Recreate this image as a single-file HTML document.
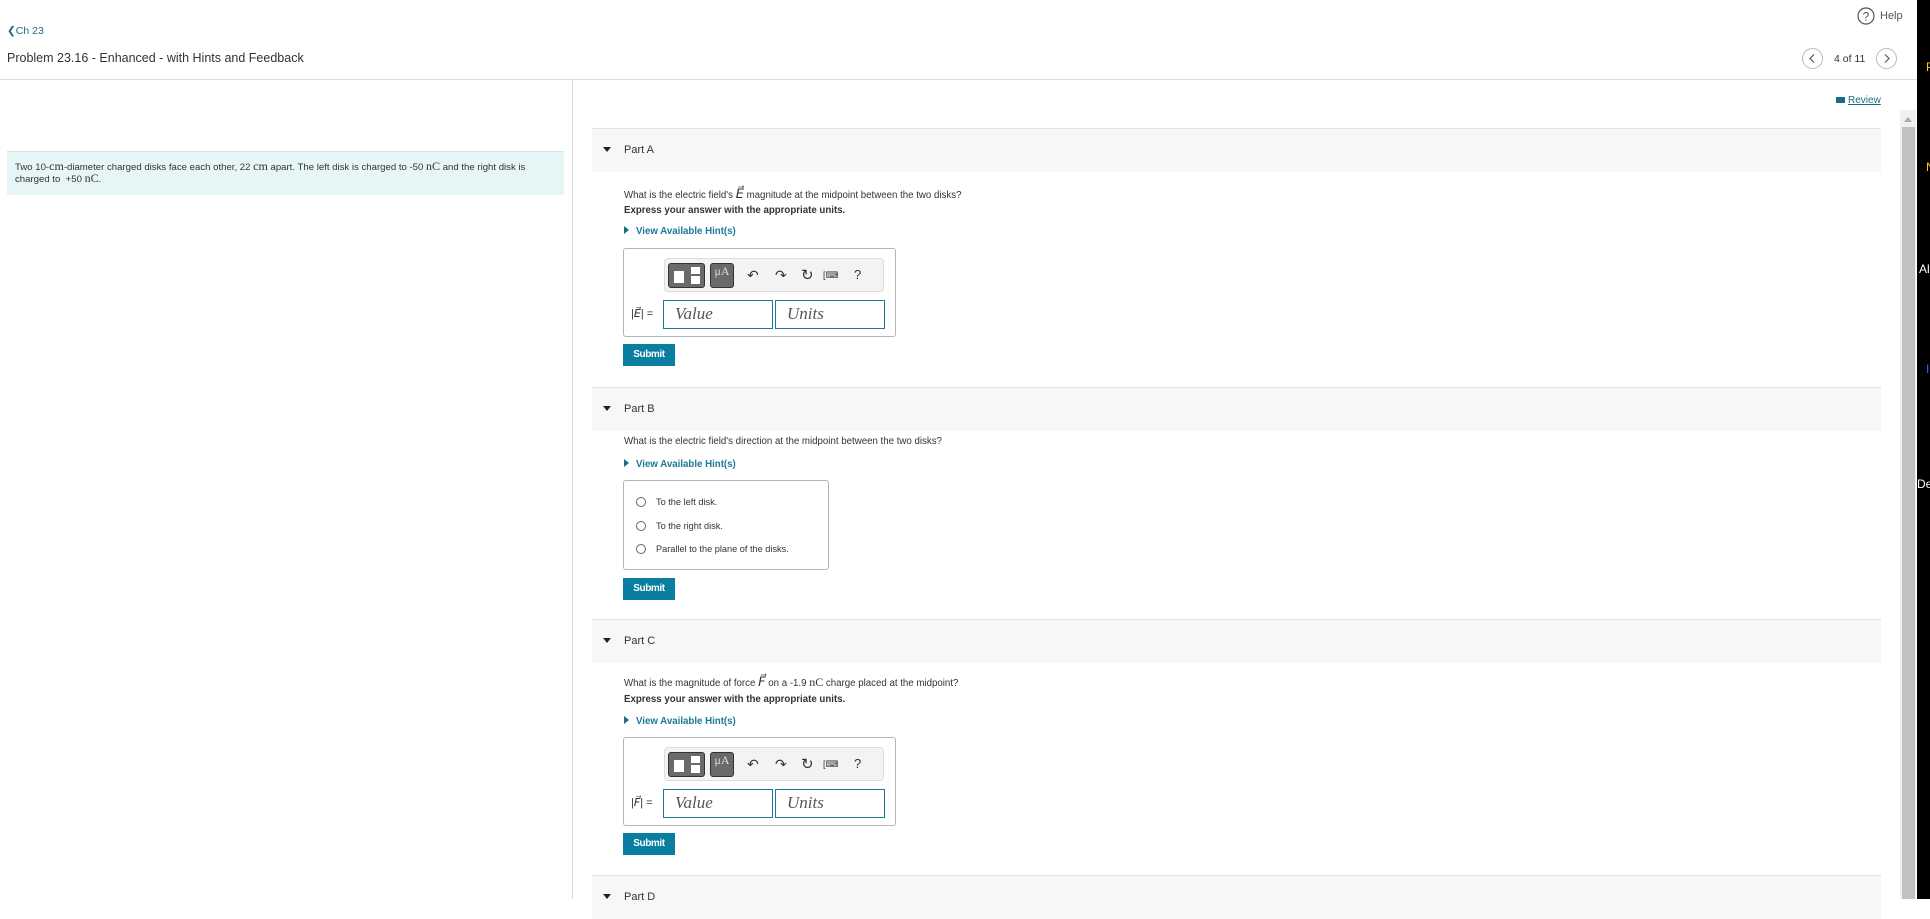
<!DOCTYPE html>
<html><head><meta charset="utf-8"><style>
*{margin:0;padding:0;box-sizing:border-box}
body{width:1930px;height:899px;overflow:hidden;background:#fff;font-family:"Liberation Sans",Arial,sans-serif;color:#333;position:relative}
.a{position:absolute;white-space:nowrap}
.hdr{position:absolute;left:592px;width:1289px;height:44px;background:#f7f7f7;border-top:1px solid #e2e2e2}
.hdr .tri{position:absolute;left:11px;top:18px;width:0;height:0;border-left:4px solid transparent;border-right:4px solid transparent;border-top:5px solid #222}
.hdr span{position:absolute;left:32px;top:15px;font-size:11px;color:#333}
.q{font-size:9.7px;color:#333}
.b{font-size:9.7px;font-weight:bold;color:#333}
.hint{font-size:9.7px;font-weight:bold;color:#1a7a98}
.hint:before{content:"";display:inline-block;width:0;height:0;border-top:4px solid transparent;border-bottom:4px solid transparent;border-left:5px solid #1a6c86;margin-right:7px}
.box{position:absolute;border:1px solid #b5b5b5;border-radius:3px;background:#fff}
.tb{position:absolute;left:40px;top:9px;width:220px;height:34px;background:#f3f3f3;border:1px solid #ddd;border-radius:4px}
.btn{position:absolute;top:4px;height:25px;background:#6a6a6a;border:1px solid #333;border-radius:3px;color:#ddd;font-family:"Liberation Serif",serif;font-size:12px;text-align:center}
.sq{position:absolute;background:#fff}
.inp{position:absolute;top:51px;width:110px;height:29px;border:1px solid #1a7a98;font-family:"Liberation Serif",serif;font-style:italic;font-size:17px;color:#555;padding:3px 0 0 11px}
.sub{position:absolute;left:623px;width:52px;height:22px;background:#0a7ea0;color:#fff;font-size:10px;font-weight:bold;text-align:center;line-height:22px;letter-spacing:-.4px}
.rad{position:absolute;left:12px;width:10px;height:10px;border:1px solid #666;border-radius:50%}
.rl{position:absolute;left:32px;font-size:9.2px;color:#333}
</style></head><body>
<div class="a" style="left:7px;top:25px;font-size:10.5px;color:#1a6c86">&#10094;Ch 23</div>
<div class="a" style="left:7px;top:51px;font-size:12.5px;color:#333">Problem 23.16 - Enhanced - with Hints and Feedback</div>
<svg class="a" style="left:1857px;top:7px" width="18" height="18"><circle cx="9" cy="9" r="8" fill="none" stroke="#555" stroke-width="1.2"/><text x="9" y="13.5" font-size="12" text-anchor="middle" fill="#555" font-family="Liberation Sans">?</text></svg>
<div class="a" style="left:1880px;top:10px;font-size:11px;color:#555">Help</div>
<svg class="a" style="left:1802px;top:48px" width="21" height="21"><circle cx="10.5" cy="10.5" r="10" fill="none" stroke="#bbb"/><path d="M12 6.5 L8 10.5 L12 14.5" fill="none" stroke="#555" stroke-width="1.2"/></svg>
<div class="a" style="left:1834px;top:53px;font-size:10.5px;color:#333">4 of 11</div>
<svg class="a" style="left:1876px;top:48px" width="21" height="21"><circle cx="10.5" cy="10.5" r="10" fill="none" stroke="#bbb"/><path d="M9 6.5 L13 10.5 L9 14.5" fill="none" stroke="#555" stroke-width="1.2"/></svg>
<div class="a" style="left:0;top:79px;width:1917px;height:1px;background:#ddd"></div>
<div class="a" style="left:572px;top:80px;width:1px;height:819px;background:#d8d8d8"></div>
<div class="a" style="left:1836px;top:95px;font-size:10px;color:#1a6c86"><span style="display:inline-block;width:9px;height:6px;background:#1a6c86;margin-right:3px"></span><u>Review</u></div>
<div class="a" style="left:7px;top:151px;width:557px;height:44px;background:#e6f5f6;border-top:1px solid #d5e5e6"></div>
<div class="a" style="left:15px;top:161px;font-size:9.6px;color:#333;line-height:11px">Two 10-<span style="font-family:'Liberation Serif';font-size:12px">cm</span>-diameter charged disks face each other, 22 <span style="font-family:'Liberation Serif';font-size:12px">cm</span> apart. The left disk is charged to -50 <span style="font-family:'Liberation Serif';font-size:12px">nC</span> and the right disk is<br>charged to &nbsp;+50 <span style="font-family:'Liberation Serif';font-size:12px">nC</span>.</div>

<div class="hdr" style="top:128px"><div class="tri"></div><span>Part A</span></div>
<div class="a q" style="left:624px;top:186px">What is the electric field's <i style="font-family:'Liberation Serif';font-size:13px">E&#8407;</i> magnitude at the midpoint between the two disks?</div>
<div class="a b" style="left:624px;top:205px">Express your answer with the appropriate units.</div>
<div class="a hint" style="left:624px;top:226px">View Available Hint(s)</div>
<div class="box" style="left:623px;top:248px;width:273px;height:89px">
<div class="tb"><div class="btn" style="left:3px;width:37px"><div class="sq" style="left:5px;top:7px;width:10px;height:12px"></div><div class="sq" style="left:22px;top:3px;width:9px;height:7px"></div><div class="sq" style="left:22px;top:12px;width:9px;height:8px"></div></div><div class="btn" style="left:45px;width:24px">μA</div>
<div class="a" style="left:82px;top:8px;font-size:14px;color:#333">&#8630;</div><div class="a" style="left:110px;top:8px;font-size:14px;color:#333">&#8631;</div><div class="a" style="left:136px;top:7px;font-size:15px;color:#333">&#8635;</div><div class="a" style="left:158px;top:11px;font-size:9px;color:#333">[&#9000;</div><div class="a" style="left:189px;top:8px;font-size:13px;color:#333">?</div></div>
<div class="a" style="left:7px;top:58px;font-size:11px;color:#333">|<i style="font-family:'Liberation Serif'">E&#8407;</i>| =</div>
<div class="inp" style="left:39px">Value</div><div class="inp" style="left:151px">Units</div></div>
<div class="sub" style="top:344px">Submit</div>

<div class="hdr" style="top:387px"><div class="tri"></div><span>Part B</span></div>
<div class="a q" style="left:624px;top:436px">What is the electric field's direction at the midpoint between the two disks?</div>
<div class="a hint" style="left:624px;top:459px">View Available Hint(s)</div>
<div class="box" style="left:623px;top:480px;width:206px;height:90px">
<div class="rad" style="top:16px"></div><div class="rl" style="top:16px">To the left disk.</div>
<div class="rad" style="top:40px"></div><div class="rl" style="top:40px">To the right disk.</div>
<div class="rad" style="top:63px"></div><div class="rl" style="top:63px">Parallel to the plane of the disks.</div></div>
<div class="sub" style="top:578px">Submit</div>

<div class="hdr" style="top:619px"><div class="tri"></div><span>Part C</span></div>
<div class="a q" style="left:624px;top:674px">What is the magnitude of force <i style="font-family:'Liberation Serif';font-size:13px">F&#8407;</i> on a -1.9 <span style="font-family:'Liberation Serif';font-size:12px">nC</span> charge placed at the midpoint?</div>
<div class="a b" style="left:624px;top:694px">Express your answer with the appropriate units.</div>
<div class="a hint" style="left:624px;top:716px">View Available Hint(s)</div>
<div class="box" style="left:623px;top:737px;width:273px;height:89px">
<div class="tb"><div class="btn" style="left:3px;width:37px"><div class="sq" style="left:5px;top:7px;width:10px;height:12px"></div><div class="sq" style="left:22px;top:3px;width:9px;height:7px"></div><div class="sq" style="left:22px;top:12px;width:9px;height:8px"></div></div><div class="btn" style="left:45px;width:24px">μA</div>
<div class="a" style="left:82px;top:8px;font-size:14px;color:#333">&#8630;</div><div class="a" style="left:110px;top:8px;font-size:14px;color:#333">&#8631;</div><div class="a" style="left:136px;top:7px;font-size:15px;color:#333">&#8635;</div><div class="a" style="left:158px;top:11px;font-size:9px;color:#333">[&#9000;</div><div class="a" style="left:189px;top:8px;font-size:13px;color:#333">?</div></div>
<div class="a" style="left:7px;top:58px;font-size:11px;color:#333">|<i style="font-family:'Liberation Serif'">F&#8407;</i>| =</div>
<div class="inp" style="left:39px">Value</div><div class="inp" style="left:151px">Units</div></div>
<div class="sub" style="top:833px">Submit</div>

<div class="hdr" style="top:875px"><div class="tri"></div><span>Part D</span></div>

<div class="a" style="left:1900px;top:110px;width:16px;height:789px;background:#f0f0f0"></div>
<div class="a" style="left:1904px;top:117px;width:0;height:0;border-left:4px solid transparent;border-right:4px solid transparent;border-bottom:5px solid #aaa"></div>
<div class="a" style="left:1902px;top:127px;width:13px;height:772px;background:#c1c1c1"></div>
<div class="a" style="left:1917px;top:0;width:13px;height:899px;background:#000;overflow:hidden;font-size:12px">
<div class="a" style="left:9px;top:60px;color:#fc0">P</div><div class="a" style="left:9px;top:160px;color:#fc0">N</div><div class="a" style="left:2px;top:262px;color:#fff">Al</div><div class="a" style="left:9px;top:362px;color:#36f">I</div><div class="a" style="left:0;top:477px;color:#fff">De</div></div>
</body></html>
